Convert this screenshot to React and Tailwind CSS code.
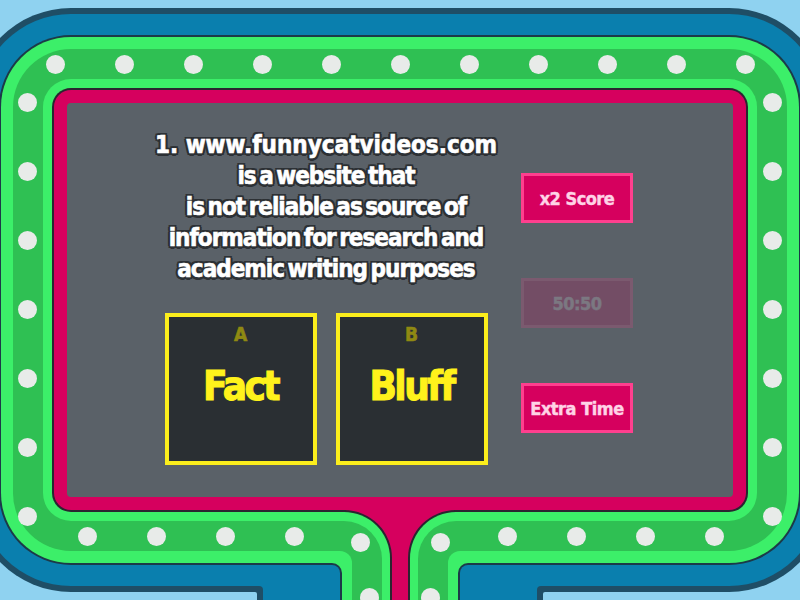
import React from 'react';

const font = { fontFamily: '"DejaVu Sans Condensed", "DejaVu Sans", sans-serif' };

function Dot() {
    return <div className="w-[19px] h-[19px] rounded-full bg-[#e8ebe9] shrink-0" />;
}

function DotRow({ count, className }) {
    return (
        <div className={`absolute flex gap-[50px] ${className}`}>
            {Array.from({ length: count }).map((_, i) => <Dot key={i} />)}
        </div>
    );
}

function DotCol({ count, className }) {
    return (
        <div className={`absolute flex flex-col gap-[50px] ${className}`}>
            {Array.from({ length: count }).map((_, i) => <Dot key={i} />)}
        </div>
    );
}

function AnswerCard({ letter, text }) {
    return (
        <div className="w-[152px] h-[152px] border-4 border-[#fcee1c] bg-[#2a2f33] flex flex-col items-center">
            <div className="mt-[4px] text-[19px] leading-[26px] font-bold text-[#8f8912] [-webkit-text-stroke:0.6px_#8f8912]" style={font}>{letter}</div>
            <div className="mt-[16px] text-[40px] leading-[46px] font-bold text-[#fff21b] tracking-[-2.5px] [-webkit-text-stroke:1px_#fff21b]" style={font}>{text}</div>
        </div>
    );
}

function PowerButton({ label, faded }) {
    return (
        <div className={`h-[50px] w-[112px] bg-[#d6005e] border-[3px] border-[#ff3f8e] flex items-center justify-center ${faded ? 'opacity-20' : ''}`}>
            <span className="text-[18px] font-bold text-[#ffd3e6] tracking-[-0.5px] [-webkit-text-stroke:0.4px_#ffd3e6]" style={font}>{label}</span>
        </div>
    );
}

export default function App() {
    const outline = "[text-shadow:-2px_-2px_0_#2c3034,2px_-2px_0_#2c3034,-2px_2px_0_#2c3034,2px_2px_0_#2c3034,0_-2.5px_0_#2c3034,0_2.5px_0_#2c3034,-2.5px_0_0_#2c3034,2.5px_0_0_#2c3034]";

    return (
        <div className="relative w-[800px] h-[600px] overflow-hidden bg-[#8fd2f0]">
            {/* main frame */}
            <div className="ml-[-28px] mt-[8px] w-[856px] h-[584px] rounded-[99px] bg-[#1f4e66] p-[6px]">
                <div className="h-full rounded-[93px] bg-[#0a7fae] p-[21px]">
                    <div className="h-full rounded-[72px] bg-[#1c3a48] p-[2px]">
                        <div className="h-full rounded-[70px] bg-[#3cef69] p-[12px]">
                            <div className="h-full rounded-[58px] bg-[#2fc053] p-[30px]">
                                <div className="h-full rounded-[28px] bg-[#3cef69] p-[9px]">
                                    <div className="h-full rounded-[19px] bg-[#2a2530] p-[2px]">
                                        <div className="h-full rounded-[17px] bg-[#d6005e] p-[13px]">
                                            <div className="h-full rounded-[4px] bg-[#5a6168] flex pl-[73px]">
                                                <div className="w-[372px] flex flex-col items-center pt-[27px]">
                                                    <div className={`text-center text-white font-bold text-[24px] leading-[31px] tracking-[-1px] [word-spacing:-3px] [-webkit-text-stroke:0.6px_#ffffff] ${outline}`} style={font}>
                                                        <div className="tracking-[0px] [word-spacing:0px]">1. www.funnycatvideos.com</div>
                                                        <div>is a website that</div>
                                                        <div>is not reliable as source of</div>
                                                        <div>information for research and</div>
                                                        <div>academic writing purposes</div>
                                                    </div>
                                                    <div className="mt-[28px] flex gap-[19px]">
                                                        <AnswerCard letter="A" text="Fact" />
                                                        <AnswerCard letter="B" text="Bluff" />
                                                    </div>
                                                </div>
                                                <div className="ml-[9px] w-[112px] pt-[70px] flex flex-col gap-[55px]">
                                                    <PowerButton label="x2 Score" />
                                                    <PowerButton label="50:50" faded />
                                                    <PowerButton label="Extra Time" />
                                                </div>
                                            </div>
                                        </div>
                                    </div>
                                </div>
                            </div>
                        </div>
                    </div>
                </div>
            </div>

            {/* stem to the next board */}
            <div className="absolute left-[346px] top-[505px] w-[108px] h-[100px] bg-[#d6005e]" />

            {/* left tube */}
            <div className="absolute left-[150px] top-[510px] w-[242px] h-[200px] rounded-tr-[48px] bg-[#2a2530] pt-[2px] pr-[2px] flex">
                <div className="flex-1 rounded-tr-[46px] bg-[#3cef69] pt-[9px] pr-[8px] flex">
                    <div className="flex-1 rounded-tr-[38px] bg-[#2fc053] pt-[30px] pr-[30px] flex">
                        <div className="flex-1 rounded-tr-[12px] bg-[#3cef69] pt-[12px] pr-[10px] flex">
                            <div className="flex-1 rounded-tr-[10px] bg-[#1c3a48] pt-[2px] pr-[2px] flex">
                                <div className="flex-1 rounded-tr-[8px] bg-[#0a7fae] pt-[21px] pr-[77px] flex">
                                    <div className="flex-1 rounded-tr-[4px] bg-[#1f4e66] pt-[6px] pr-[6px] flex">
                                        <div className="flex-1 rounded-tr-[2px] bg-[#8fd2f0]" />
                                    </div>
                                </div>
                            </div>
                        </div>
                    </div>
                </div>
            </div>

            {/* right tube */}
            <div className="absolute left-[408px] top-[510px] w-[242px] h-[200px] rounded-tl-[48px] bg-[#2a2530] pt-[2px] pl-[2px] flex">
                <div className="flex-1 rounded-tl-[46px] bg-[#3cef69] pt-[9px] pl-[8px] flex">
                    <div className="flex-1 rounded-tl-[38px] bg-[#2fc053] pt-[30px] pl-[30px] flex">
                        <div className="flex-1 rounded-tl-[12px] bg-[#3cef69] pt-[12px] pl-[10px] flex">
                            <div className="flex-1 rounded-tl-[10px] bg-[#1c3a48] pt-[2px] pl-[2px] flex">
                                <div className="flex-1 rounded-tl-[8px] bg-[#0a7fae] pt-[21px] pl-[77px] flex">
                                    <div className="flex-1 rounded-tl-[4px] bg-[#1f4e66] pt-[6px] pl-[6px] flex">
                                        <div className="flex-1 rounded-tl-[2px] bg-[#8fd2f0]" />
                                    </div>
                                </div>
                            </div>
                        </div>
                    </div>
                </div>
            </div>

            {/* light bulbs */}
            <DotRow count={11} className="left-[46px] top-[55px]" />
            <DotCol count={7} className="left-[18px] top-[93px]" />
            <DotCol count={7} className="left-[763px] top-[93px]" />
            <DotRow count={4} className="left-[78px] top-[527px]" />
            <DotRow count={4} className="left-[498px] top-[527px]" />
            <div className="absolute left-[351px] top-[533px]"><Dot /></div>
            <div className="absolute left-[431px] top-[533px]"><Dot /></div>
            <div className="absolute left-[360px] top-[588px]"><Dot /></div>
            <div className="absolute left-[421px] top-[588px]"><Dot /></div>
        </div>
    );
}
